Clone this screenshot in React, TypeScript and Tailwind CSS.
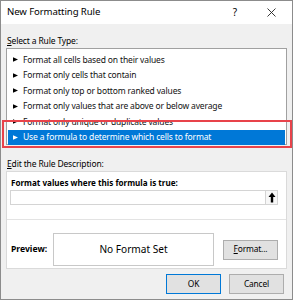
import React from 'react';

const ruleTypes = [
  'Format all cells based on their values',
  'Format only cells that contain',
  'Format only top or bottom ranked values',
  'Format only values that are above or below average',
  'Format only unique or duplicate values',
  'Use a formula to determine which cells to format',
];

const Bullet: React.FC<{ selected?: boolean }> = ({ selected }) => (
  <svg width="5" height="5" viewBox="0 0 5 5" className="shrink-0">
    <path d="M0 0.3 L5 2.5 L0 4.7 Z" fill={selected ? '#ffffff' : '#000000'} />
  </svg>
);

export default function App() {
  const selectedIndex = 5;

  return (
    <div className="relative w-[293px] h-[300px] flex flex-col bg-[#f0f0f0] border border-[#8c8c8c] text-black font-['Noto_Sans',sans-serif] overflow-hidden">
      {/* title bar */}
      <div className="h-[23px] shrink-0 bg-white flex items-center pl-[6px] pr-[16px] text-[9.6px] tracking-[-0.1px]">
        <span>New Formatting Rule</span>
        <span className="ml-auto mr-[30px] text-[10px]">?</span>
        <svg width="9" height="9" viewBox="0 0 9 9">
          <path d="M0.5 0.5 L8.5 8.5 M8.5 0.5 L0.5 8.5" stroke="#222" strokeWidth="0.9" />
        </svg>
      </div>

      <div className="flex flex-col px-[5px] text-[8.5px] tracking-[-0.15px]">
        <div className="mt-[10px] h-[14px] flex items-center pl-[1px] leading-none">
          <span><span className="underline">S</span>elect a Rule Type:</span>
        </div>

        {/* rule type list */}
        <div className="h-[97px] bg-white border border-[#a0a0a0] pt-[3px] px-[1px]">
          {ruleTypes.map((rule, i) => {
            const selected = i === selectedIndex;
            return (
              <div
                key={rule}
                className={`h-[15.5px] flex items-center gap-[5px] pl-[5px] leading-none ${
                  selected ? 'bg-[#0078d7] text-white' : 'text-[#111]'
                }`}
              >
                <Bullet selected={selected} />
                <span>{rule}</span>
              </div>
            );
          })}
        </div>

        <div className="mt-[12px] h-[14px] flex items-center pl-[1px] leading-none">
          <span><span className="underline">E</span>dit the Rule Description:</span>
        </div>

        {/* description panel */}
        <div className="h-[98px] bg-white border border-[#dadada] flex flex-col">
          <div className="mt-[4px] h-[14px] flex items-center pl-[4px] text-[8.1px] tracking-normal font-bold leading-none">
            Format values where this formula is true:
          </div>
          <div className="ml-[3px] mr-[8px] h-[15px] flex border border-[#d4d4d4] bg-white">
            <div className="flex-1" />
            <div className="w-[12px] h-full flex items-center justify-center border-l border-[#d4d4d4] border-b-[#9a9a9a] bg-[#f7f7f7]">
              <svg width="8" height="11" viewBox="0 0 8 11">
                <path d="M4 0.5 L7.5 5 L5.2 5 L5.2 10.5 L2.8 10.5 L2.8 5 L0.5 5 Z" fill="#000" />
              </svg>
            </div>
          </div>
          <div className="mt-[14px] h-px bg-[#e3e3e3]" />
          <div className="flex items-center mt-[13px] pl-[4px]">
            <span className="w-[42px] text-[8.6px] tracking-normal font-bold">Preview:</span>
            <div className="w-[161px] h-[33px] border border-[#c8c8c8] flex items-center justify-center text-[10.1px] tracking-normal">
              No Format Set
            </div>
            <button className="ml-[9px] w-[55px] h-[20px] bg-[#e1e1e1] border border-[#adadad] text-[8.4px]">
              <span className="underline">F</span>ormat...
            </button>
          </div>
        </div>

        {/* dialog buttons */}
        <div className="mt-[5px] flex justify-end gap-[8px] pr-[3px]">
          <button className="w-[55px] h-[20px] bg-[#e1e1e1] border border-[#0078d7] text-[8.4px]">OK</button>
          <button className="w-[55px] h-[20px] bg-[#e1e1e1] border border-[#adadad] text-[8.4px]">Cancel</button>
        </div>
      </div>

      {/* red highlight annotation */}
      <div className="absolute left-[1px] top-[119px] w-[290px] h-[28px] border-2 border-[#e8434a]" />
    </div>
  );
}
